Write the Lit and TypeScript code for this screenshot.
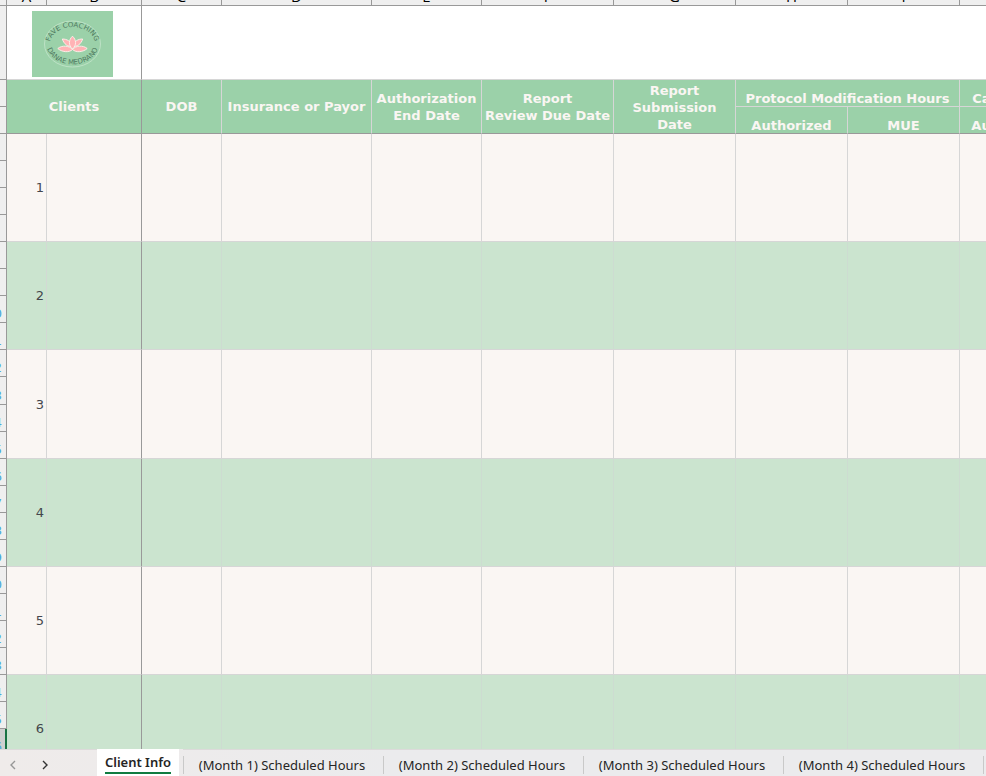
import { LitElement, html, svg, css, nothing } from "lit";
import { customElement, state } from "lit/decorators.js";

const COLUMNS = ["A", "B", "C", "D", "E", "F", "G", "H", "I", "J", "K"];
const CLIENTS = [1, 2, 3, 4, 5, 6];
const ROWS_PER_CLIENT = 4;
const FIRST_CLIENT_ROW = 4;
const TALL_ROW = 13;
const ACTIVE_ROW = 26;
const SHEETS = [
  "Client Info",
  "(Month 1) Scheduled Hours",
  "(Month 2) Scheduled Hours",
  "(Month 3) Scheduled Hours",
  "(Month 4) Scheduled Hours",
  "(Month 5) Scheduled Hours",
];

@customElement("brand-logo")
export class BrandLogo extends LitElement {
  static styles = css`
    :host { display: block; width: 81px; height: 66px; background: #9bd1a9; }
    svg { display: block; width: 100%; height: 100%; }
    .ring { fill: none; stroke: #c1e3c8; stroke-width: 0.9; }
    .name { font: 7px "DejaVu Sans", sans-serif; fill: #4f7a60; }
    .petal { fill: #ffb3b5; stroke: #fff1ec; stroke-width: 0.9; stroke-linejoin: round; }
  `;
  render() {
    const petals = [
      "M40.500 35 C36 36.500 32 33 30.300 28 C35 28 38.500 30 40.500 35Z",
      "M40.500 35 C45 36.500 49 33 50.700 28 C46 28 42.500 30 40.500 35Z",
      "M40.500 38 C36.300 34 36.500 29 40.500 25.200 C44.500 29 44.700 34 40.500 38Z",
      "M40.500 38.500 C37 42 29.500 41 25.800 37.500 C30 34 37.500 34.500 40.500 38.500Z",
      "M40.500 38.500 C44 42 51.500 41 55.200 37.500 C51 34 43.500 34.500 40.500 38.500Z",
    ];
    return html`<svg viewBox="0 0 81 66" role="img" aria-label="Fave Coaching, Danae Medrano">
      <defs>
        <path id="upper" d="M18 33 A22.500 17 0 0 1 63 33" />
        <path id="lower" d="M14.500 33 A26 20.500 0 0 0 66.500 33" />
      </defs>
      <ellipse class="ring" cx="40.500" cy="33" rx="28" ry="23" />
      <text class="name" text-anchor="middle"><textPath href="#upper" startOffset="50%">FAVE COACHING</textPath></text>
      <text class="name" text-anchor="middle"><textPath href="#lower" startOffset="50%">DANAE MEDRANO</textPath></text>
      ${petals.map((d) => svg`<path class="petal" d=${d} />`)}
    </svg>`;
  }
}

@customElement("client-sheet")
export class ClientSheet extends LitElement {
  static styles = css`
    :host { display: block; overflow: hidden; background: #fff; }
    table {
      width: 1168px;
      table-layout: fixed;
      border-collapse: separate;
      border-spacing: 0;
      font: 13px/17px "DejaVu Sans", Verdana, sans-serif;
      color: #44464c;
    }
    th, td {
      box-sizing: border-box;
      padding: 0;
      overflow: hidden;
      border: 0 solid #d6d6d6;
      border-width: 0 1px 1px 0;
    }
    .w-head { width: 7px; }
    .w-a { width: 40px; }
    .w-b { width: 95px; }
    .w-c { width: 80px; }
    .w-d { width: 150px; }
    .w-e { width: 110px; }
    .w-f { width: 132px; }
    .w-g { width: 122px; }
    .w-h, .w-i { width: 112px; }
    .w-j, .w-k { width: 104px; }
    .letters th { border-color: #999; background: #efefef; height: 6px; }
    .letter {
      display: flex;
      align-items: flex-end;
      justify-content: center;
      height: 5px;
      overflow: hidden;
      font: 15px/18px "Open Sans", sans-serif;
      color: #000;
    }
    .letter span { flex: none; height: 18px; }
    .num {
      height: 27px;
      border-color: #999;
      background: #efefef;
      color: #4aa8dc;
      font-weight: 400;
      vertical-align: bottom;
    }
    .num.tall { height: 28px; }
    .digits { display: flex; justify-content: flex-end; overflow: hidden; width: 2px; }
    .num.active { background: #d0d0d0; border-right: 2px solid #1a7344; }
    .banner td, .banner .num { height: 74px; }
    .banner .logo-cell, .frozen { border-right-color: #999; }
    .logo-cell { padding: 2px 4px 0 0; }
    .logo-cell brand-logo { margin: 0 auto; }
    .title th:not(.num), .sub th:not(.num) {
      background: #9bd1a9;
      color: #faf6f3;
      font-weight: 700;
      text-align: center;
      white-space: nowrap;
    }
    .title .multi { padding-top: 1px; }
    .title .full, .sub th { border-bottom-color: #999; }
    .title .group, .sub .leaf { vertical-align: bottom; line-height: 15px; }
    .client td { background: #faf6f3; }
    .client.even td { background: #cbe4cf; border-right-color: #cddcd1; border-bottom-color: #d6d6d6; }
    .client .id { text-align: right; padding-right: 2px; }
    .client.even .id { border-right-color: #d3d9d4; }
    .client td.frozen, .client.even td.frozen { border-right-color: #999; }
  `;

  private num(n: number) {
    const kind = n === ACTIVE_ROW ? "active" : n === TALL_ROW ? "tall" : "";
    return html`<th scope="row" class="num ${kind}">
      ${n > 9 ? html`<div class="digits">${n}</div>` : nothing}
    </th>`;
  }

  private client(id: number) {
    const first = FIRST_CLIENT_ROW + (id - 1) * ROWS_PER_CLIENT;
    const parity = id % 2 ? "odd" : "even";
    return html`
      <tr class="client ${parity}">
        ${this.num(first)}
        <td class="id" rowspan="4">${id}</td>
        <td class="frozen" rowspan="4"></td>
        ${COLUMNS.slice(2).map(() => html`<td rowspan="4"></td>`)}
      </tr>
      ${[1, 2, 3].map((i) => html`<tr>${this.num(first + i)}</tr>`)}
    `;
  }

  render() {
    return html`<table>
      <colgroup>
        <col class="w-head" />
        ${COLUMNS.map((c) => html`<col class="w-${c.toLowerCase()}" />`)}
      </colgroup>
      <thead>
        <tr class="letters">
          <th></th>
          ${COLUMNS.map((c) => html`<th scope="col"><div class="letter"><span>${c}</span></div></th>`)}
        </tr>
        <tr class="banner">
          ${this.num(1)}
          <td class="logo-cell" colspan="2"><brand-logo></brand-logo></td>
          <td colspan="9"></td>
        </tr>
        <tr class="title">
          ${this.num(2)}
          <th class="full frozen" colspan="2" rowspan="2">Clients</th>
          <th class="full" rowspan="2">DOB</th>
          <th class="full" rowspan="2">Insurance or Payor</th>
          <th class="full multi" rowspan="2">Authorization<br />End Date</th>
          <th class="full multi" rowspan="2">Report<br />Review Due Date</th>
          <th class="full multi" rowspan="2">Report<br />Submission<br />Date</th>
          <th class="group" colspan="2">Protocol Modification Hours</th>
          <th class="group" colspan="2">Caregiver Training Hours</th>
        </tr>
        <tr class="sub">
          ${this.num(3)}
          <th class="leaf">Authorized</th>
          <th class="leaf">MUE</th>
          <th class="leaf">Authorized</th>
          <th class="leaf">MUE</th>
        </tr>
      </thead>
      <tbody>${CLIENTS.map((id) => this.client(id))}</tbody>
    </table>`;
  }
}

@customElement("sheet-tabs")
export class SheetTabs extends LitElement {
  @state() private current = 0;

  static styles = css`
    :host {
      display: flex;
      height: 27px;
      overflow: hidden;
      background: linear-gradient(90deg, #efebea, #ebebed 40%);
      font: 13px/20px "Noto Sans", "Open Sans", sans-serif;
      color: #252525;
    }
    button { border: 0; padding: 0; background: none; font: inherit; color: inherit; flex: none; }
    .nav { display: flex; width: 97px; flex: none; box-sizing: border-box; padding-left: 6px; gap: 18px; border-top: 1px solid #dcdada; }
    .nav button { width: 14px; display: grid; place-items: center; padding-top: 4px; }
    .nav svg { width: 8px; height: 10px; fill: none; stroke: #333; stroke-width: 1.4; }
    .nav .off svg { stroke: #979797; }
    .tabs { display: flex; flex: 1; min-width: 0; overflow: hidden; }
    .tab { box-sizing: border-box; width: 200px; border-top: 1px solid #dcdada; display: flex; align-items: flex-start; }
    .tab span { flex: 1; height: 18px; margin-top: 6px; padding-right: 3px; line-height: 18px; border-left: 1px solid #c9c9c9; text-align: center; white-space: nowrap; }
    .tab.on { width: 82px; background: #fff; border: 0; font-weight: 600; justify-content: center; margin-right: 4px; }
    .tab.on span { flex: none; margin-top: 3px; padding: 0; height: 20px; line-height: 20px; border: 0; border-bottom: 2px solid #107c41; }
  `;

  render() {
    return html`
      <div class="nav">
        <button class="off" aria-label="Previous sheets"><svg viewBox="0 0 8 10"><path d="M6 1 2 5l4 4" /></svg></button>
        <button aria-label="Next sheets"><svg viewBox="0 0 8 10"><path d="m2 1 4 4-4 4" /></svg></button>
      </div>
      <div class="tabs" role="tablist">
        ${SHEETS.map((name, i) => html`<button
          role="tab"
          class="tab ${i === this.current ? "on" : ""}"
          aria-selected=${i === this.current ? "true" : "false"}
          @click=${() => (this.current = i)}
        ><span>${name}</span></button>`)}
      </div>`;
  }
}

@customElement("app-root")
export class AppRoot extends LitElement {
  static styles = css`
    :host { display: flex; flex-direction: column; height: 100vh; overflow: hidden; }
    client-sheet { flex: 1; min-height: 0; }
    sheet-tabs { flex: none; }
  `;
  render() {
    return html`<client-sheet></client-sheet><sheet-tabs></sheet-tabs>`;
  }
}
